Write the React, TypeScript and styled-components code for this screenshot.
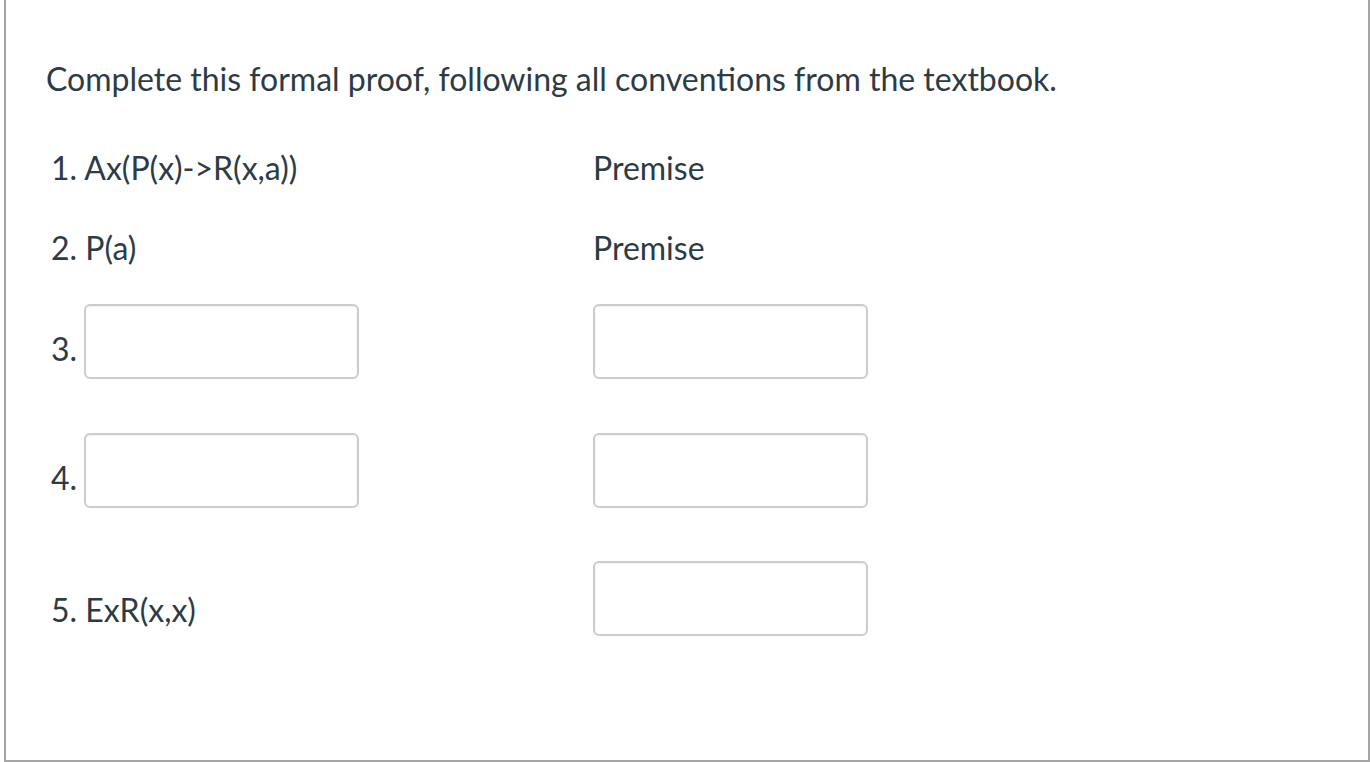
import React from "react";
import styled, { createGlobalStyle } from "styled-components";

const Global = createGlobalStyle`
  html, body { margin: 0; padding: 0; background: #ffffff; }
  body { font-family: Lato, "Open Sans", sans-serif; color: #2d3b45; }
  * { box-sizing: border-box; }
`;

const Frame = styled.div`
  margin-left: 4px;
  width: 1366px;
  height: 762px;
  border: 2px solid #a5a5a5;
  border-top: none;
  background: #ffffff;
  padding: 0 0 0 40px;
`;

const Prompt = styled.p`
  margin: 0;
  padding-top: 59px;
  font-size: 32px;
  line-height: 40px;
  color: #2d3b45;
`;

const Proof = styled.div`
  display: flex;
  flex-direction: column;
  padding-left: 5px;
`;

const Row = styled.div<{ $top: number; $h: number }>`
  display: grid;
  grid-template-columns: 542px 1fr;
  align-items: center;
  margin-top: ${(p) => p.$top}px;
  height: ${(p) => p.$h}px;
`;

const LeftCell = styled.div`
  display: flex;
  align-items: center;
  gap: 7px;
  height: 100%;
`;

const Text = styled.span<{ $drop?: number }>`
  font-size: 32px;
  line-height: 40px;
  color: #2d3b45;
  white-space: nowrap;
  position: relative;
  top: ${(p) => p.$drop ?? 0}px;
`;

const Field = styled.input`
  width: 275px;
  height: 75px;
  border: 2px solid #cccccc;
  border-radius: 6px;
  background: #ffffff;
  font-family: Lato, sans-serif;
  font-size: 30px;
  color: #2d3b45;
  padding: 0 12px;
  outline: none;
  box-shadow: inset 0 1px 2px rgba(0, 0, 0, 0.06);
`;

export default function App() {
  return (
    <>
      <Global />
      <Frame>
        <Prompt>Complete this formal proof, following all conventions from the textbook.</Prompt>
        <Proof>
          <Row $top={49} $h={40}>
            <LeftCell>
              <Text>1. Ax(P(x)-&gt;R(x,a))</Text>
            </LeftCell>
            <Text>Premise</Text>
          </Row>
          <Row $top={40} $h={40}>
            <LeftCell>
              <Text>2. P(a)</Text>
            </LeftCell>
            <Text>Premise</Text>
          </Row>
          <Row $top={36} $h={75}>
            <LeftCell>
              <Text $drop={7}>3.</Text>
              <Field aria-label="Line 3 formula" />
            </LeftCell>
            <Field aria-label="Line 3 justification" />
          </Row>
          <Row $top={54} $h={75}>
            <LeftCell>
              <Text $drop={7}>4.</Text>
              <Field aria-label="Line 4 formula" />
            </LeftCell>
            <Field aria-label="Line 4 justification" />
          </Row>
          <Row $top={53} $h={75}>
            <LeftCell>
              <Text $drop={11}>5. ExR(x,x)</Text>
            </LeftCell>
            <Field aria-label="Line 5 justification" />
          </Row>
        </Proof>
      </Frame>
    </>
  );
}
